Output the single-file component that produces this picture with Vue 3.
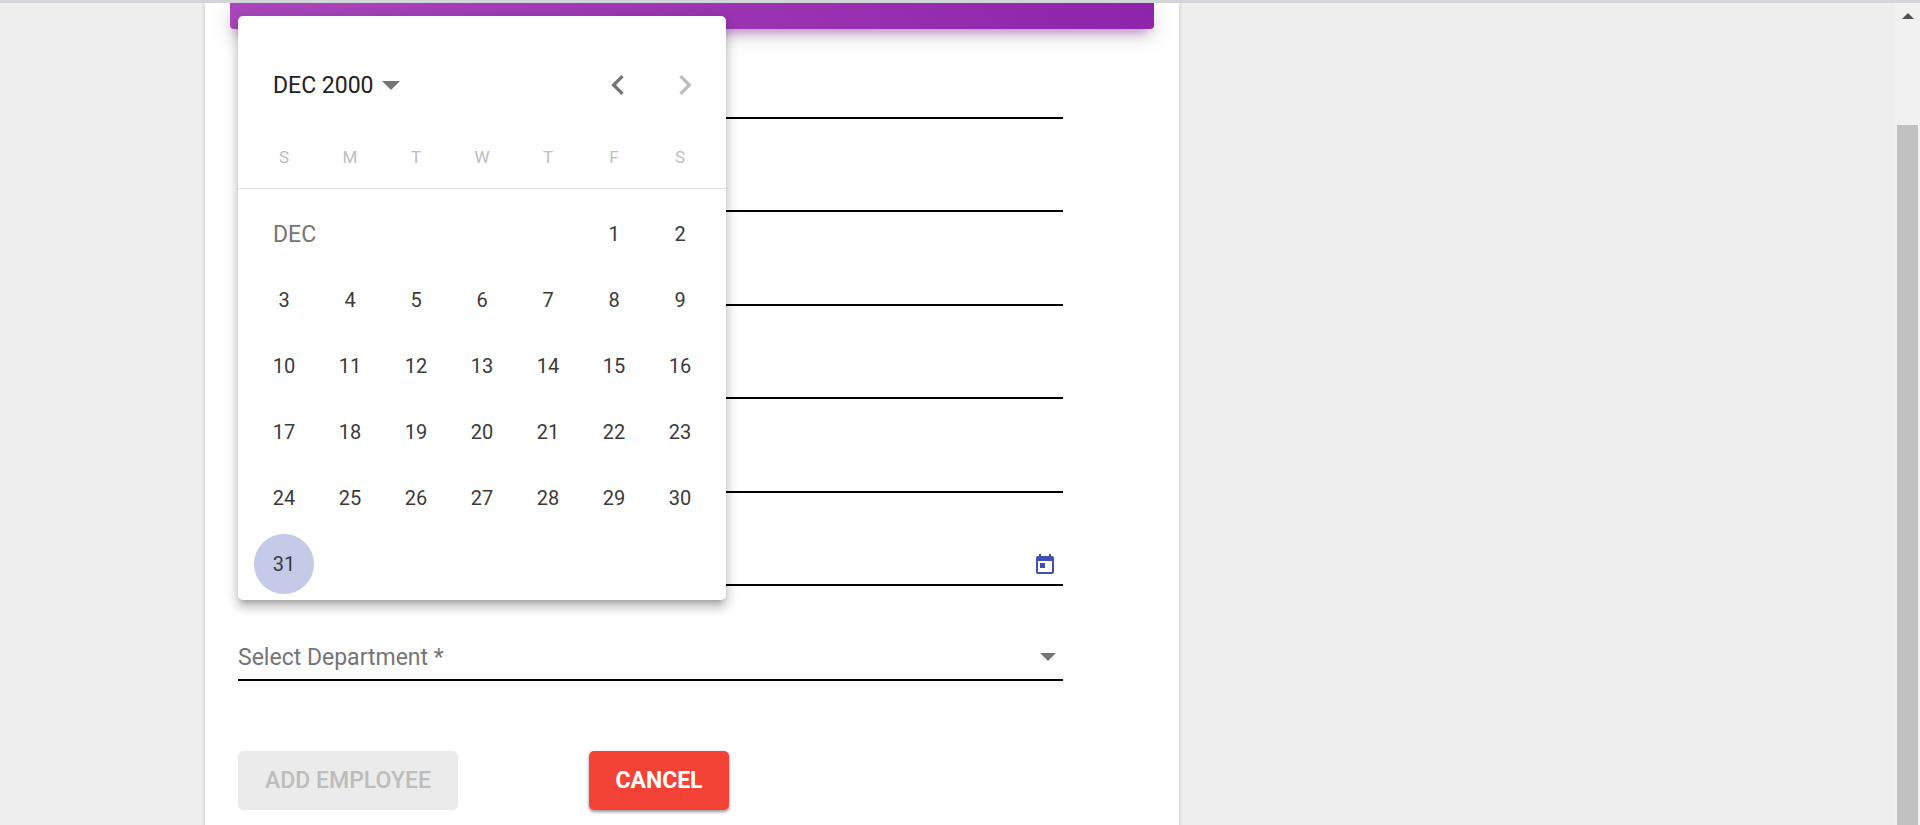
<script setup>
import { computed } from 'vue'

const weekdays = ['S', 'M', 'T', 'W', 'T', 'F', 'S']
const fields = [1, 2, 3, 4, 5]

// dec 2000 starts on a friday, 5 empty cells before the 1st
const days = computed(() => {
  const list = []
  for (let i = 1; i <= 31; i++) list.push(i)
  return list
})
</script>

<template>
  <div class="page">
    <div class="topline"></div>
    <div class="content">
      <main class="main">
        <section class="card">
          <div class="card-header"></div>
          <form class="form" @submit.prevent>
            <div v-for="f in fields" :key="f" class="field"></div>
            <div class="field">
              <svg class="today" viewBox="0 0 24 24" width="24" height="24">
                <path d="M19 3h-1V1h-2v2H8V1H6v2H5c-1.11 0-1.99.9-1.99 2L3 19c0 1.1.89 2 2 2h14c1.1 0 2-.9 2-2V5c0-1.1-.9-2-2-2zm0 16H5V8h14v11zM7 10h5v5H7z" />
              </svg>
            </div>
            <div class="field field-select">
              <span class="placeholder">Select Department *</span>
              <span class="arrow"></span>
            </div>
            <div class="actions">
              <button type="button" class="btn btn-add" disabled>Add Employee</button>
              <button type="button" class="btn btn-cancel">Cancel</button>
            </div>
          </form>
        </section>

        <div class="picker">
          <div class="picker-head">
            <div class="month">
              <span>DEC 2000</span>
              <span class="month-caret"></span>
            </div>
            <div class="nav">
              <svg viewBox="0 0 24 24" width="40" height="40">
                <path class="prev" d="M15.41 7.41 14 6l-6 6 6 6 1.41-1.41L10.83 12z" />
              </svg>
              <svg viewBox="0 0 24 24" width="40" height="40">
                <path class="next" d="M8.59 16.59 10 18l6-6-6-6-1.41 1.41L13.17 12z" />
              </svg>
            </div>
          </div>
          <div class="weekdays">
            <span v-for="(d, i) in weekdays" :key="i">{{ d }}</span>
          </div>
          <div class="dates">
            <div class="month-label">DEC</div>
            <button
              v-for="d in days"
              :key="d"
              type="button"
              class="day"
              :class="{ selected: d == 31 }"
            >{{ d }}</button>
          </div>
        </div>
      </main>

      <aside class="scrollbar">
        <span class="scroll-up"></span>
        <div class="thumb"></div>
      </aside>
    </div>
  </div>
</template>

<style scoped>
.page {
  height: 825px;
  display: flex;
  flex-direction: column;
  overflow: hidden;
  background: #eeeeee;
  font-family: Roboto, "Liberation Sans", sans-serif;
}

.topline {
  height: 3px;
  flex: none;
  background: #d4d5d9;
}

.content {
  flex: 1;
  display: flex;
  min-height: 0;
}

.main {
  flex: 1;
  position: relative;
  padding-left: 205px;
  overflow: hidden;
}

.scrollbar {
  width: 25px;
  flex: none;
  background: #f1f1f1;
  display: flex;
  flex-direction: column;
  align-items: center;
}

.scroll-up {
  margin-top: 10px;
  width: 0;
  height: 0;
  border-left: 6px solid transparent;
  border-right: 6px solid transparent;
  border-bottom: 6px solid #505050;
}

.thumb {
  margin-top: 106px;
  width: 21px;
  flex: 1;
  background: #c1c1c1;
}

.card {
  width: 974px;
  height: 860px;
  background: #ffffff;
  box-shadow: 0 1px 4px 0 rgba(0, 0, 0, 0.2);
}

.card-header {
  margin-left: 25px;
  width: 924px;
  height: 26px;
  border-radius: 0 0 4px 4px;
  background: linear-gradient(60deg, #ab47bc, #8e24aa);
  box-shadow: 0 5px 25px 0 rgba(0, 0, 0, 0.14), 0 9px 12px -6px rgba(156, 39, 176, 0.5);
}

.form {
  width: 825px;
  margin-left: 33px;
}

.field {
  height: 93.4px;
  box-sizing: border-box;
  border-bottom: 2px solid #000000;
  display: flex;
  align-items: flex-end;
  justify-content: space-between;
  padding-bottom: 7px;
}

.field:first-child {
  height: 90px;
}

.field-select {
  height: 95.4px;
  padding-bottom: 6px;
}

.placeholder {
  font-size: 23px;
  line-height: 30px;
  color: #757575;
}

.arrow {
  width: 0;
  height: 0;
  margin: 0 7px 12px 0;
  border-left: 8px solid transparent;
  border-right: 8px solid transparent;
  border-top: 8px solid #757575;
}

.today {
  margin-left: auto;
  margin-right: 6px;
  fill: #3f51b5;
}

.actions {
  display: flex;
  gap: 131px;
  margin-top: 70px;
}

.btn {
  height: 59px;
  padding: 0;
  border: none;
  border-radius: 5px;
  font-family: inherit;
  font-size: 23px;
  font-weight: 500;
  text-transform: uppercase;
}

.btn-add {
  width: 220px;
  background: #ebebeb;
  color: #bdbdbd;
}

.btn-cancel {
  width: 140px;
  background: #f44336;
  color: #ffffff;
  font-weight: 700;
  box-shadow: 0 2px 3px 0 rgba(0, 0, 0, 0.3), 0 2px 4px 0 rgba(0, 0, 0, 0.14);
}

.picker {
  position: absolute;
  top: 13px;
  left: 238px;
  width: 488px;
  height: 584px;
  background: #ffffff;
  border-radius: 5px;
  box-shadow: 0 5px 5px -3px rgba(0, 0, 0, 0.2), 0 8px 10px 1px rgba(0, 0, 0, 0.14), 0 3px 14px 2px rgba(0, 0, 0, 0.12);
}

.picker-head {
  height: 70px;
  padding: 34px 21px 0 35px;
  display: flex;
  align-items: center;
  justify-content: space-between;
}

.month {
  display: flex;
  align-items: center;
  gap: 9px;
  font-size: 23px;
  font-weight: 400;
  color: #212121;
}

.month-caret {
  width: 0;
  height: 0;
  margin-left: -1px;
  border-left: 9px solid transparent;
  border-right: 9px solid transparent;
  border-top: 9px solid #757575;
}

.nav {
  display: flex;
  gap: 27px;
}

.nav svg {
  display: block;
}

.prev {
  fill: #757575;
}

.next {
  fill: #bdbdbd;
}

.weekdays {
  display: grid;
  grid-template-columns: repeat(7, 66px);
  padding: 20px 13px 14px;
  height: 34px;
  border-bottom: 1px solid #e0e0e0;
  font-size: 17px;
  line-height: 34px;
  text-align: center;
  color: #bdbdbd;
}

.dates {
  display: grid;
  grid-template-columns: repeat(7, 66px);
  grid-auto-rows: 66px;
  padding: 12px 13px 0;
}

.month-label {
  grid-column: 1 / span 5;
  padding-left: 22px;
  line-height: 68px;
  font-size: 23px;
  font-weight: 400;
  color: #757575;
}

.day {
  width: 60px;
  height: 60px;
  margin: 3px;
  padding: 0;
  border: none;
  border-radius: 50%;
  background: none;
  font-family: inherit;
  font-size: 20px;
  color: #3a3a3a;
}

.day.selected {
  background: #c5cae9;
}
</style>

<style>
html, body {
  margin: 0;
  overflow: hidden;
}
</style>
